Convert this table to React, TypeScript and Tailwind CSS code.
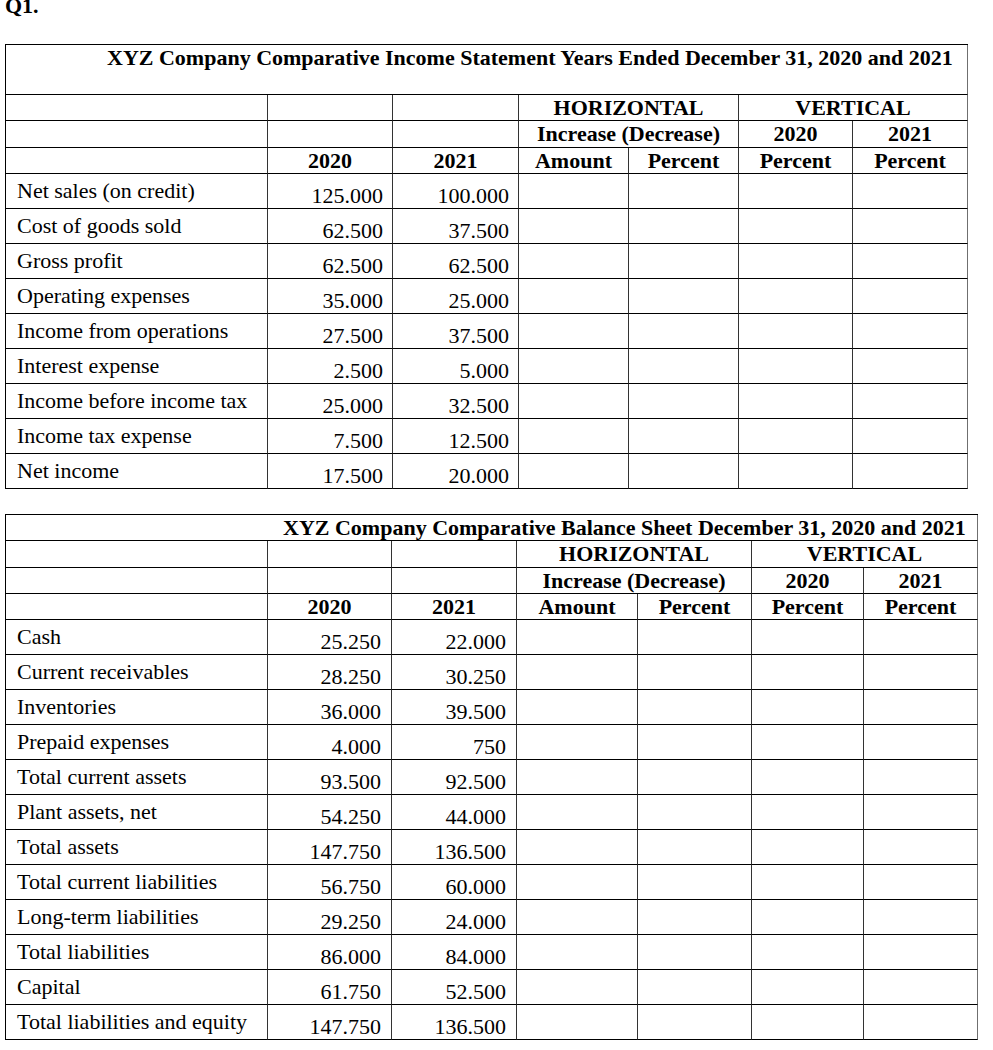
import React from 'react';

type Row = [string, string, string];

const incomeRows: Row[] = [
  ['Net sales (on credit)', '125.000', '100.000'],
  ['Cost of goods sold', '62.500', '37.500'],
  ['Gross profit', '62.500', '62.500'],
  ['Operating expenses', '35.000', '25.000'],
  ['Income from operations', '27.500', '37.500'],
  ['Interest expense', '2.500', '5.000'],
  ['Income before income tax', '25.000', '32.500'],
  ['Income tax expense', '7.500', '12.500'],
  ['Net income', '17.500', '20.000'],
];

const balanceRows: Row[] = [
  ['Cash', '25.250', '22.000'],
  ['Current receivables', '28.250', '30.250'],
  ['Inventories', '36.000', '39.500'],
  ['Prepaid expenses', '4.000', '750'],
  ['Total current assets', '93.500', '92.500'],
  ['Plant assets, net', '54.250', '44.000'],
  ['Total assets', '147.750', '136.500'],
  ['Total current liabilities', '56.750', '60.000'],
  ['Long-term liabilities', '29.250', '24.000'],
  ['Total liabilities', '86.000', '84.000'],
  ['Capital', '61.750', '52.500'],
  ['Total liabilities and equity', '147.750', '136.500'],
];

// a single grid cell: bottom line in black, right line slightly grey like the scan
const Cell: React.FC<{ className?: string; last?: boolean; children?: React.ReactNode }> = ({
  className = '',
  last,
  children,
}) => (
  <div
    className={`border-b border-b-black border-r ${last ? 'border-r-[#6f6f6f]' : 'border-r-[#333]'} leading-none ${className}`}
  >
    {children}
  </div>
);

const HeaderRows: React.FC<{ heights: [string, string, string] }> = ({ heights }) => {
  const [h1, h2, h3] = heights;
  return (
    <>
      {/* row 1 */}
      <Cell className={h1} />
      <Cell className={h1} />
      <Cell className={h1} />
      <Cell className={`${h1} col-span-2 text-center font-bold pt-[2px]`}>HORIZONTAL</Cell>
      <Cell last className={`${h1} col-span-2 text-center font-bold pt-[2px]`}>VERTICAL</Cell>

      {/* row 2 */}
      <Cell className={h2} />
      <Cell className={h2} />
      <Cell className={h2} />
      <Cell className={`${h2} col-span-2 text-center font-bold pt-[2px]`}>Increase (Decrease)</Cell>
      <Cell className={`${h2} text-center font-bold pt-[2px]`}>2020</Cell>
      <Cell last className={`${h2} text-center font-bold pt-[2px]`}>2021</Cell>

      {/* row 3 */}
      <Cell className={h3} />
      <Cell className={`${h3} text-center font-bold pt-[2px]`}>2020</Cell>
      <Cell className={`${h3} text-center font-bold pt-[2px]`}>2021</Cell>
      <Cell className={`${h3} text-center font-bold pt-[2px]`}>Amount</Cell>
      <Cell className={`${h3} text-center font-bold pt-[2px]`}>Percent</Cell>
      <Cell className={`${h3} text-center font-bold pt-[2px]`}>Percent</Cell>
      <Cell last className={`${h3} text-center font-bold pt-[2px]`}>Percent</Cell>
    </>
  );
};

const DataRows: React.FC<{ rows: Row[]; numPad: string }> = ({ rows, numPad }) => (
  <>
    {rows.map(([label, a, b]) => (
      <React.Fragment key={label}>
        <Cell className="h-[35px] pl-[11px] pt-[6px] whitespace-nowrap">{label}</Cell>
        <Cell className={`h-[35px] text-right pt-[11px] ${numPad}`}>{a}</Cell>
        <Cell className={`h-[35px] text-right pt-[11px] ${numPad}`}>{b}</Cell>
        <Cell className="h-[35px]" />
        <Cell className="h-[35px]" />
        <Cell className="h-[35px]" />
        <Cell last className="h-[35px]" />
      </React.Fragment>
    ))}
  </>
);

export default function App() {
  return (
    <div className="min-h-[1050px] w-[993px] bg-white text-black text-[22px] font-['Liberation_Serif','Times_New_Roman',serif] overflow-hidden">
      <div className="mt-[-5px] ml-[5px] font-bold leading-none">Q1.</div>

      {/* Income statement */}
      <div className="mt-[27px] ml-[5px] w-max grid grid-cols-[262px_125px_126px_110px_110px_114px_115px] border-l border-l-black border-t border-t-black">
        <Cell last className="col-span-7 h-[50px] pl-[101px] pt-[2px] font-bold whitespace-nowrap">
          XYZ Company Comparative Income Statement Years Ended December 31, 2020 and 2021
        </Cell>
        <HeaderRows heights={['h-[26px]', 'h-[27px]', 'h-[26px]']} />
        <DataRows rows={incomeRows} numPad="pr-[9px]" />
      </div>

      {/* Balance sheet */}
      <div className="mt-[25px] ml-[5px] w-max grid grid-cols-[262px_124px_125px_121px_114px_112px_114px] border-l border-l-black border-t border-t-black">
        <Cell last className="col-span-7 h-[26px] pl-[277px] pt-[2px] font-bold whitespace-nowrap">
          XYZ Company Comparative Balance Sheet December 31, 2020 and 2021
        </Cell>
        <HeaderRows heights={['h-[27px]', 'h-[26px]', 'h-[26px]']} />
        <DataRows rows={balanceRows} numPad="pr-[10px]" />
      </div>
    </div>
  );
}
